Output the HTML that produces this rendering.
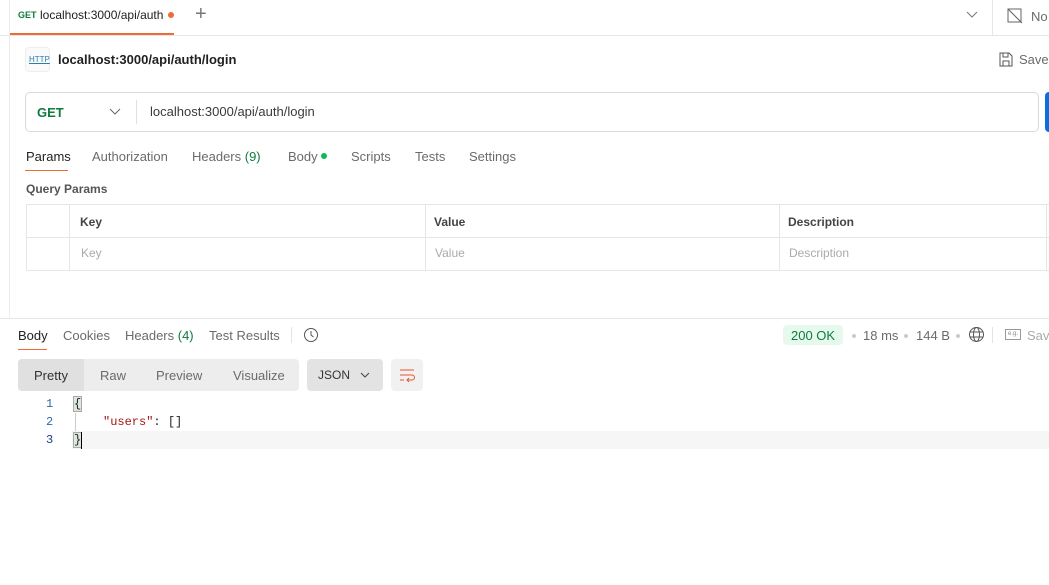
<!DOCTYPE html>
<html><head><style>
*{box-sizing:border-box;margin:0;padding:0}
body{width:1049px;height:585px;overflow:hidden;background:#fff;font-family:"Liberation Sans",sans-serif;color:#212121;position:relative;font-size:13px}
.a{position:absolute;white-space:nowrap}
.g{color:#6b6b6b}
</style></head><body>
<!-- top bar -->
<div class="a" style="left:0;top:35px;width:1049px;height:1px;background:#e6e6e6"></div>
<div class="a" style="left:9px;top:0;width:1px;height:35px;background:#ececec"></div>
<div class="a" style="left:18px;top:10px;font-size:9px;font-weight:bold;color:#0f7b3e">GET</div>
<div class="a" style="left:40px;top:8px;font-size:12px;width:123px;overflow:hidden">localhost:3000/api/auth/login</div>
<div class="a" style="left:168px;top:12px;width:6px;height:6px;border-radius:50%;background:#ef6a35"></div>
<div class="a" style="left:10px;top:33px;width:164px;height:2px;background:#ef6a35"></div>
<div class="a" style="left:195px;top:3px;font-size:20px;color:#777;font-weight:300">+</div>
<svg class="a" style="left:966px;top:11px" width="12" height="8"><path d="M1 1l5 5 5-5" stroke="#777" fill="none"/></svg>
<div class="a" style="left:992px;top:0;width:1px;height:35px;background:#e6e6e6"></div>
<svg class="a" style="left:1007px;top:8px" width="16" height="16"><rect x="1" y="1" width="13" height="13" fill="none" stroke="#666"/><path d="M1 1l14 14" stroke="#666"/></svg>
<div class="a g" style="left:1031px;top:9px">No</div>
<!-- left border -->
<div class="a" style="left:9px;top:35px;width:1px;height:283px;background:#ececec"></div>
<!-- title -->
<div class="a" style="left:25px;top:47px;width:25px;height:25px;border:1px solid #eee;border-radius:4px;background:#fafafa"></div>
<div class="a" style="left:29px;top:55px;font-size:8px;color:#2a7fa8;text-decoration:underline">HTTP</div>
<div class="a" style="left:58px;top:52px;font-size:13px;font-weight:bold;color:#212121">localhost:3000/api/auth/login</div>
<svg class="a" style="left:999px;top:52px" width="14" height="15"><path d="M1 1h9l3 3v10H1z M4 1v4h5V1 M4 14V9h6v5" fill="none" stroke="#555"/></svg>
<div class="a g" style="left:1019px;top:52px">Save</div>
<!-- url box -->
<div class="a" style="left:25px;top:92px;width:1014px;height:40px;border:1px solid #d9d9d9;border-radius:5px"></div>
<div class="a" style="left:37px;top:105px;font-weight:bold;color:#0f7b3e;font-size:13px">GET</div>
<svg class="a" style="left:109px;top:108px" width="12" height="8"><path d="M1 1l5 5 5-5" stroke="#666" fill="none"/></svg>
<div class="a" style="left:136px;top:100px;width:1px;height:24px;background:#e0e0e0"></div>
<div class="a" style="left:150px;top:104px;color:#3a3a3a">localhost:3000/api/auth/login</div>
<div class="a" style="left:1045px;top:92px;width:10px;height:40px;background:#0d6cde;border-radius:4px"></div>
<!-- req tabs -->
<div class="a" style="left:26px;top:149px;color:#222">Params</div>
<div class="a" style="left:25px;top:170px;width:43px;height:1px;background:#ef6a35"></div>
<div class="a g" style="left:92px;top:149px">Authorization</div>
<div class="a g" style="left:192px;top:149px">Headers <span style="color:#0f7b3e">(9)</span></div>
<div class="a g" style="left:288px;top:149px">Body</div>
<div class="a" style="left:321px;top:153px;width:6px;height:6px;border-radius:50%;background:#0cbb52"></div>
<div class="a g" style="left:351px;top:149px">Scripts</div>
<div class="a g" style="left:415px;top:149px">Tests</div>
<div class="a g" style="left:469px;top:149px">Settings</div>
<div class="a" style="left:26px;top:182px;font-weight:bold;color:#555;font-size:12px">Query Params</div>
<!-- table -->
<div class="a" style="left:26px;top:204px;width:1030px;height:67px;border:1px solid #e6e6e6"></div>
<div class="a" style="left:26px;top:237px;width:1030px;height:1px;background:#e6e6e6"></div>
<div class="a" style="left:69px;top:204px;width:1px;height:67px;background:#e6e6e6"></div>
<div class="a" style="left:425px;top:204px;width:1px;height:67px;background:#e6e6e6"></div>
<div class="a" style="left:779px;top:204px;width:1px;height:67px;background:#e6e6e6"></div>
<div class="a" style="left:1046px;top:204px;width:1px;height:67px;background:#e6e6e6"></div>
<div class="a" style="left:80px;top:215px;font-weight:bold;color:#444;font-size:12px">Key</div>
<div class="a" style="left:434px;top:215px;font-weight:bold;color:#444;font-size:12px">Value</div>
<div class="a" style="left:788px;top:215px;font-weight:bold;color:#444;font-size:12px">Description</div>
<div class="a" style="left:81px;top:246px;color:#aaa;font-size:12px">Key</div>
<div class="a" style="left:435px;top:246px;color:#aaa;font-size:12px">Value</div>
<div class="a" style="left:789px;top:246px;color:#aaa;font-size:12px">Description</div>
<!-- divider -->
<div class="a" style="left:0;top:318px;width:1049px;height:1px;background:#e6e6e6"></div>
<!-- response tabs -->
<div class="a" style="left:18px;top:328px;color:#222">Body</div>
<div class="a" style="left:18px;top:349px;width:29px;height:1px;background:#ef6a35"></div>
<div class="a g" style="left:63px;top:328px">Cookies</div>
<div class="a g" style="left:125px;top:328px">Headers <span style="color:#0f7b3e">(4)</span></div>
<div class="a g" style="left:209px;top:328px">Test Results</div>
<div class="a" style="left:291px;top:327px;width:1px;height:16px;background:#e3e3e3"></div>
<svg class="a" style="left:303px;top:327px" width="16" height="16"><circle cx="8" cy="8" r="6.5" fill="none" stroke="#555"/><path d="M8 4v4l2.5 2" fill="none" stroke="#555"/></svg>
<div class="a" style="left:783px;top:325px;width:60px;height:20px;background:#e6f9ed;border-radius:4px"></div>
<div class="a" style="left:791px;top:328px;color:#0f7b3e">200 OK</div>
<div class="a" style="left:852px;top:334px;width:4px;height:4px;border-radius:50%;background:#ccc"></div>
<div class="a g" style="left:863px;top:328px">18 ms</div>
<div class="a" style="left:904px;top:334px;width:4px;height:4px;border-radius:50%;background:#ccc"></div>
<div class="a g" style="left:916px;top:328px">144 B</div>
<div class="a" style="left:956px;top:334px;width:4px;height:4px;border-radius:50%;background:#ccc"></div>
<svg class="a" style="left:968px;top:326px" width="17" height="17"><circle cx="8.5" cy="8.5" r="7" fill="none" stroke="#555"/><ellipse cx="8.5" cy="8.5" rx="3" ry="7" fill="none" stroke="#555"/><path d="M1.5 6h14M1.5 11h14" stroke="#555"/></svg>
<div class="a" style="left:992px;top:327px;width:1px;height:16px;background:#e3e3e3"></div>
<div class="a" style="left:1005px;top:329px;width:16px;height:11px;border:1px solid #999;font-size:6px;color:#888;text-align:center;line-height:9px">e.g.</div>
<div class="a" style="left:1027px;top:328px;color:#aaa">Save</div>
<!-- body controls -->
<div class="a" style="left:18px;top:359px;width:281px;height:32px;background:#ededed;border-radius:4px"></div>
<div class="a" style="left:18px;top:359px;width:66px;height:32px;background:#e0e0e0;border-radius:4px 0 0 4px"></div>
<div class="a" style="left:34px;top:368px;color:#333">Pretty</div>
<div class="a g" style="left:100px;top:368px">Raw</div>
<div class="a g" style="left:156px;top:368px">Preview</div>
<div class="a g" style="left:233px;top:368px">Visualize</div>
<div class="a" style="left:307px;top:359px;width:76px;height:32px;background:#e3e3e3;border-radius:4px"></div>
<div class="a" style="left:318px;top:368px;color:#333;font-size:12px">JSON</div>
<svg class="a" style="left:360px;top:372px" width="10" height="7"><path d="M1 1l4 4 4-4" stroke="#444" fill="none"/></svg>
<div class="a" style="left:391px;top:359px;width:32px;height:32px;background:#f1f1f1;border-radius:4px"></div>
<svg class="a" style="left:399px;top:368px" width="16" height="14"><path d="M1 2h14M1 7h12a2.5 2.5 0 0 1 0 5H8M10 10l-2 2 2 2M1 12h4" fill="none" stroke="#e5532d"/></svg>
<!-- code -->
<div class="a" style="left:72px;top:431px;width:977px;height:18px;background:#f6f6f6"></div>
<div class="a" style="left:75px;top:413px;width:1px;height:18px;background:#ccc"></div>
<div class="a" style="left:46px;top:397px;font-family:'Liberation Mono',monospace;font-size:12px;color:#2a6aa8">1</div>
<div class="a" style="left:46px;top:415px;font-family:'Liberation Mono',monospace;font-size:12px;color:#2a6aa8">2</div>
<div class="a" style="left:46px;top:433px;font-family:'Liberation Mono',monospace;font-size:12px;color:#1a3a8a">3</div>
<div class="a" style="left:74px;top:397px;font-family:'Liberation Mono',monospace;font-size:12px;background:#dde8dd;outline:1px solid #aaa">{</div>
<div class="a" style="left:103px;top:415px;font-family:'Liberation Mono',monospace;font-size:12px"><span style="color:#a31515">"users"</span>: []</div>
<div class="a" style="left:74px;top:433px;font-family:'Liberation Mono',monospace;font-size:12px;background:#dde8dd;outline:1px solid #aaa">}</div>
<div class="a" style="left:81px;top:432px;width:1px;height:17px;background:#000"></div>
</body></html>
